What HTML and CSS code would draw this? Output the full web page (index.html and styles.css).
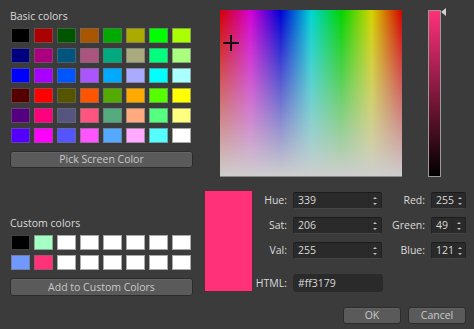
FILE: index.html
```html
<!DOCTYPE html>
<html lang="en">
  <head>
    <meta charset="utf-8">
    <title>Select Color</title>
    <link rel="stylesheet" href="styles.css">
  </head>
  <body>
    <div class='dialog'>
      <div class='main'>
        <div class='left'>
          <div class='label'>Basic colors</div>
          <div class='swatches'>
            <div class='swatch' style='background:#000000'></div>
            <div class='swatch' style='background:#aa0000'></div>
            <div class='swatch' style='background:#005500'></div>
            <div class='swatch' style='background:#aa5500'></div>
            <div class='swatch' style='background:#00aa00'></div>
            <div class='swatch' style='background:#aaaa00'></div>
            <div class='swatch' style='background:#00ff00'></div>
            <div class='swatch' style='background:#aaff00'></div>
            <div class='swatch' style='background:#00007f'></div>
            <div class='swatch' style='background:#aa007f'></div>
            <div class='swatch' style='background:#00557f'></div>
            <div class='swatch' style='background:#aa557f'></div>
            <div class='swatch' style='background:#00aa7f'></div>
            <div class='swatch' style='background:#aaaa7f'></div>
            <div class='swatch' style='background:#00ff7f'></div>
            <div class='swatch' style='background:#aaff7f'></div>
            <div class='swatch' style='background:#0000ff'></div>
            <div class='swatch' style='background:#aa00ff'></div>
            <div class='swatch' style='background:#0055ff'></div>
            <div class='swatch' style='background:#aa55ff'></div>
            <div class='swatch' style='background:#00aaff'></div>
            <div class='swatch' style='background:#aaaaff'></div>
            <div class='swatch' style='background:#00ffff'></div>
            <div class='swatch' style='background:#aaffff'></div>
            <div class='swatch' style='background:#550000'></div>
            <div class='swatch' style='background:#ff0000'></div>
            <div class='swatch' style='background:#555500'></div>
            <div class='swatch' style='background:#ff5500'></div>
            <div class='swatch' style='background:#55aa00'></div>
            <div class='swatch' style='background:#ffaa00'></div>
            <div class='swatch' style='background:#55ff00'></div>
            <div class='swatch' style='background:#ffff00'></div>
            <div class='swatch' style='background:#55007f'></div>
            <div class='swatch' style='background:#ff007f'></div>
            <div class='swatch' style='background:#55557f'></div>
            <div class='swatch' style='background:#ff557f'></div>
            <div class='swatch' style='background:#55aa7f'></div>
            <div class='swatch' style='background:#ffaa7f'></div>
            <div class='swatch' style='background:#55ff7f'></div>
            <div class='swatch' style='background:#ffff7f'></div>
            <div class='swatch' style='background:#5500ff'></div>
            <div class='swatch' style='background:#ff00ff'></div>
            <div class='swatch' style='background:#5555ff'></div>
            <div class='swatch' style='background:#ff55ff'></div>
            <div class='swatch' style='background:#55aaff'></div>
            <div class='swatch' style='background:#ffaaff'></div>
            <div class='swatch' style='background:#55ffff'></div>
            <div class='swatch' style='background:#ffffff'></div>
          </div>
          <div class='button pick'>Pick Screen Color</div>
          <div class='label custom-label'>Custom colors</div>
          <div class='swatches'>
            <div class='swatch' style='background:#000000'></div>
            <div class='swatch' style='background:#a4ffc4'></div>
            <div class='swatch'></div>
            <div class='swatch'></div>
            <div class='swatch'></div>
            <div class='swatch'></div>
            <div class='swatch'></div>
            <div class='swatch'></div>
            <div class='swatch' style='background:#7098ff'></div>
            <div class='swatch' style='background:#ff3179'></div>
            <div class='swatch'></div>
            <div class='swatch'></div>
            <div class='swatch'></div>
            <div class='swatch'></div>
            <div class='swatch'></div>
            <div class='swatch'></div>
          </div>
          <div class='button add'>Add to Custom Colors</div>
        </div>
        <div class='right'>
          <div class='picker'>
            <div class='spectrum'>
              <div class='cross-h'></div>
              <div class='cross-v'></div>
            </div>
            <div class='lum'>
              <div class='arrow'></div>
            </div>
          </div>
          <div class='editor'>
            <div class='preview'></div>
            <div class='fields'>
              <div class='flabel'>Hue:</div>
              <div class='spin wide'><span class='val'>339</span><span class='arrows'><i class='up'></i><i class='down'></i></span></div>
              <div class='flabel'>Red:</div>
              <div class='spin'><span class='val'>255</span><span class='arrows'><i class='up'></i><i class='down'></i></span></div>
              <div class='flabel'>Sat:</div>
              <div class='spin wide'><span class='val'>206</span><span class='arrows'><i class='up'></i><i class='down'></i></span></div>
              <div class='flabel'>Green:</div>
              <div class='spin'><span class='val'>49</span><span class='arrows'><i class='up'></i><i class='down'></i></span></div>
              <div class='flabel'>Val:</div>
              <div class='spin wide'><span class='val'>255</span><span class='arrows'><i class='up'></i><i class='down'></i></span></div>
              <div class='flabel'>Blue:</div>
              <div class='spin'><span class='val'>121</span><span class='arrows'><i class='up'></i><i class='down'></i></span></div>
              <div class='flabel html-label'>HTML:</div>
              <div class='html-box'>#ff3179</div>
            </div>
          </div>
        </div>
      </div>
      <div class='actions'>
        <div class='button ok'>OK</div>
        <div class='button cancel'>Cancel</div>
      </div>
    </div>
  </body>
</html>
```

FILE: styles.css
```css
body {
    margin: 0;
    background-color: #3b3b3b;
    font-family: "Open Sans", "DejaVu Sans", sans-serif;
    font-size: 10.5px;
    color: #dadada;
}
.dialog {
    width: 474px;
    height: 329px;
    box-sizing: border-box;
    padding: 10px 8px 0 10px;
}
.main {
    display: flex;
}
.left {
    width: 183px;
    display: flex;
    flex-direction: column;
}
.label {
    height: 14px;
    line-height: 14px;
    margin-top: -1px;
    margin-bottom: 5px;
}
.custom-label {
    margin-top: 48px;
}
.swatches {
    display: grid;
    grid-template-columns: repeat(8, 19px);
    grid-auto-rows: 15px;
    column-gap: 4px;
    row-gap: 5px;
    padding-left: 1px;
}
.swatch {
    background-color: #ffffff;
    box-sizing: border-box;
    border: 1px solid rgba(110,110,110,0.6);
}
.button {
    box-sizing: border-box;
    background-color: #5a5a5a;
    border: 1px solid #2c2c2c;
    border-radius: 3px;
    color: #c9c9c9;
    text-align: center;
    box-shadow: inset 0 1px 0 rgba(255,255,255,0.06);
}
.pick {
    height: 17px;
    line-height: 15px;
    margin-top: 8px;
}
.add {
    height: 18px;
    line-height: 16px;
    margin-top: 8px;
}
.right {
    margin-left: 11px;
    width: 262px;
}
.picker {
    display: flex;
    padding-left: 16px;
}
.spectrum {
    position: relative;
    width: 182px;
    height: 167px;
    box-sizing: border-box;
    border-bottom: 1px solid #8a8a8a;
    background:
        linear-gradient(to bottom, rgba(206,206,206,0), #cecece),
        linear-gradient(to right, #d40000, #d400d4 16.7%, #0000d4 33.3%, #00d4d4 50%, #00d400 66.7%, #d4d400 83.3%, #d40000);
}
.cross-h {
    position: absolute;
    left: 3px;
    top: 32px;
    width: 16px;
    height: 2px;
    background-color: #111;
}
.cross-v {
    position: absolute;
    left: 10px;
    top: 25px;
    width: 2px;
    height: 16px;
    background-color: #111;
}
.lum {
    position: relative;
    margin-left: 26px;
    width: 13px;
    height: 167px;
    box-sizing: border-box;
    border: 1px solid #9a9a9a;
    background: linear-gradient(to bottom, #ff3179, #000000);
}
.arrow {
    position: absolute;
    right: -6px;
    top: -3px;
    width: 0;
    height: 0;
    border-top: 4px solid transparent;
    border-bottom: 4px solid transparent;
    border-right: 5px solid #d0d0d0;
}
.editor {
    display: flex;
    margin-top: 13px;
}
.preview {
    width: 49px;
    height: 102px;
    box-sizing: border-box;
    background-color: #ff3179;
    border: 1px solid #5a2a3a;
}
.fields {
    display: grid;
    grid-template-columns: 34px 89px 37px 35px;
    grid-auto-rows: 17px;
    column-gap: 6px;
    row-gap: 8px;
    padding-top: 2px;
}
.flabel {
    text-align: right;
    line-height: 17px;
}
.spin {
    display: flex;
    box-sizing: border-box;
    background-color: #2a2a2a;
    border: 1px solid #222;
    border-top-color: #1c1c1c;
    border-bottom-color: #454545;
    border-radius: 2px;
    line-height: 15px;
}
.spin .val {
    flex: 1;
    padding-left: 4px;
}
.arrows {
    width: 12px;
    display: flex;
    flex-direction: column;
    align-items: center;
    justify-content: center;
    gap: 4px;
    border-left: 1px solid #262626;
}
.arrows i {
    width: 0;
    height: 0;
    border-left: 2px solid transparent;
    border-right: 2px solid transparent;
}
.arrows .up {
    border-bottom: 2px solid #bdbdbd;
}
.arrows .down {
    border-top: 2px solid #bdbdbd;
}
.html-label {
    margin-top: 7px;
    line-height: 18px;
}
.html-box {
    margin-top: 7px;
    height: 18px;
    width: 90px;
    box-sizing: border-box;
    background-color: #2a2a2a;
    border: 1px solid #2a2a2a;
    border-radius: 3px;
    line-height: 16px;
    padding-left: 4px;
}
.actions {
    display: flex;
    justify-content: flex-end;
    gap: 7px;
    margin-top: 11px;
}
.ok, .cancel {
    width: 58px;
    height: 17px;
    line-height: 15px;
}
```
